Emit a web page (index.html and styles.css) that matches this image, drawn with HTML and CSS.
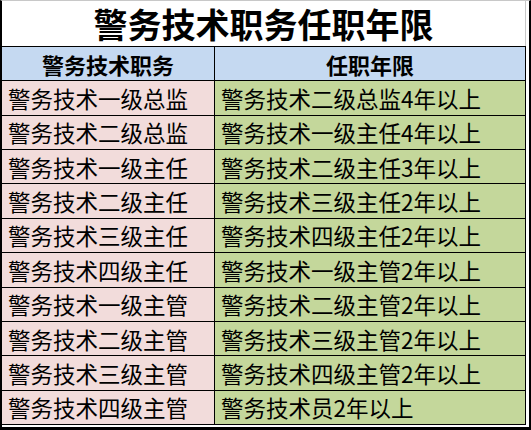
FILE: index.html
```html
<!DOCTYPE html>
<html lang="zh-CN">
<head>
<meta charset="utf-8">
<title>警务技术职务任职年限</title>
<link rel="stylesheet" href="styles.css">
</head>
<body>
<div class="frame">
  <div class="title">警务技术职务任职年限</div>
  <table class="grid">
    <thead>
      <tr><th class="c1">警务技术职务</th><th class="c2">任职年限</th></tr>
    </thead>
    <tbody>
      <tr><td class="c1">警务技术一级总监</td><td class="c2">警务技术二级总监4年以上</td></tr>
      <tr><td class="c1">警务技术二级总监</td><td class="c2">警务技术一级主任4年以上</td></tr>
      <tr><td class="c1">警务技术一级主任</td><td class="c2">警务技术二级主任3年以上</td></tr>
      <tr><td class="c1">警务技术二级主任</td><td class="c2">警务技术三级主任2年以上</td></tr>
      <tr><td class="c1">警务技术三级主任</td><td class="c2">警务技术四级主任2年以上</td></tr>
      <tr><td class="c1">警务技术四级主任</td><td class="c2">警务技术一级主管2年以上</td></tr>
      <tr><td class="c1">警务技术一级主管</td><td class="c2">警务技术二级主管2年以上</td></tr>
      <tr><td class="c1">警务技术二级主管</td><td class="c2">警务技术三级主管2年以上</td></tr>
      <tr><td class="c1">警务技术三级主管</td><td class="c2">警务技术四级主管2年以上</td></tr>
      <tr><td class="c1">警务技术四级主管</td><td class="c2">警务技术员2年以上</td></tr>
    </tbody>
  </table>
</div>
</body>
</html>
```
FILE: styles.css
```css
html, body {
  margin: 0;
  padding: 0;
  background: #ffffff;
}
body {
  font-family: "Noto Sans CJK SC", "Noto Sans", sans-serif;
  color: #000;
}
.frame {
  box-sizing: border-box;
  width: 531px;
  height: 430px;
  border-top: 1px solid #c8c8c8;
  border-left: 2px solid #000;
  border-right: 2px solid #000;
  border-bottom: 3px solid #000;
  padding-right: 3px;
  display: flex;
  flex-direction: column;
}
.title {
  box-sizing: border-box;
  flex: 0 0 45px;
  height: 45px;
  border-right: 1px solid #c8c8c8;
  display: flex;
  align-items: center;
  justify-content: center;
  font-size: 34px;
  font-weight: 700;
  line-height: 40px;
}
.grid {
  width: 524px;
  border-collapse: collapse;
  table-layout: fixed;
  flex: 0 0 auto;
}
.grid tr {
  height: 34.36px;
}
.grid th, .grid td {
  border: 1px solid #000;
  padding: 0;
  line-height: 28px;
  white-space: nowrap;
}
.grid tr > :first-child {
  border-left: none;
}
.grid th {
  background: #c5d9f1;
  font-size: 22px;
  font-weight: 700;
  text-align: center;
}
.grid th.c1 {
  width: 212px;
}
.grid td {
  font-size: 22.5px;
  font-weight: 400;
  text-align: left;
  padding-left: 6px;
}
.grid td.c1 {
  background: #f2dcdb;
}
.grid td.c2 {
  background: #c4d79b;
}
```
